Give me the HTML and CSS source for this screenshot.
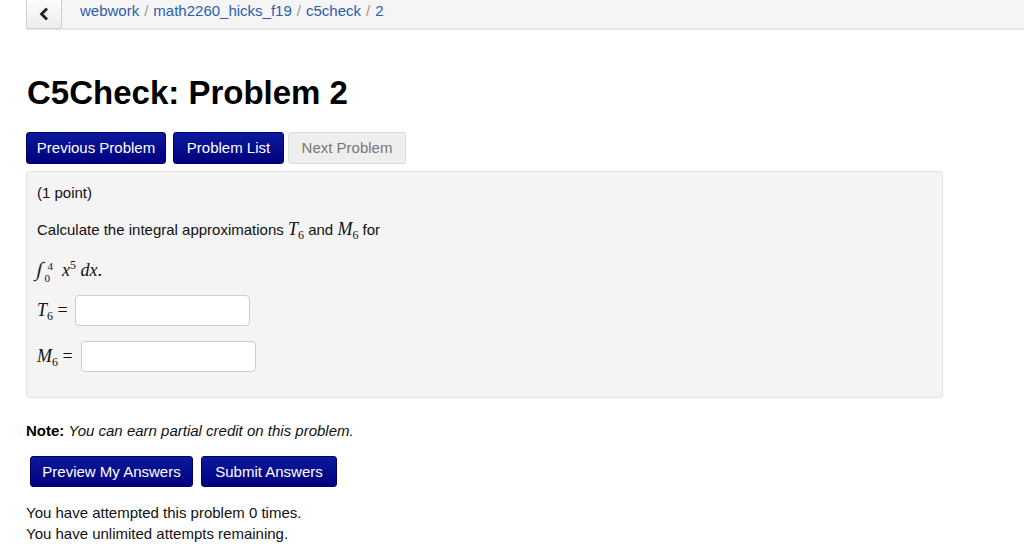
FILE: index.html
```html
<!DOCTYPE html>
<html>
<head>
<meta charset="utf-8">
<link rel="stylesheet" href="styles.css">
</head>
<body>
<div class="page">
  <div class="crumbbar">
    <div class="back"><svg width="10" height="14" viewBox="0 0 10 14"><path d="M8 1.5 L2.5 7 L8 12.5" fill="none" stroke="#222" stroke-width="2.8"/></svg></div>
    <div class="crumbs"><a>webwork</a><span class="sep">/</span><a>math2260_hicks_f19</a><span class="sep">/</span><a>c5check</a><span class="sep">/</span><a>2</a></div>
  </div>
  <h1 class="title">C5Check: Problem 2</h1>
  <div class="navbtns">
    <span class="btn primary prev">Previous Problem</span>
    <span class="btn primary list">Problem List</span>
    <span class="btn disabled next">Next Problem</span>
  </div>
  <div class="problem">
    <p class="pt">(1 point)</p>
    <p class="q">Calculate the integral approximations <span class="m"><i>T</i><sub>6</sub></span> and <span class="m"><i>M</i><sub>6</sub></span> for</p>
    <p class="integral"><span class="m"><i class="int">∫</i><span class="lims"><span class="up">4</span><span class="lo">0</span></span><i>x</i><sup>5</sup> <i>dx</i>.</span></p>
    <div class="ans first"><span class="m lbl"><i>T</i><sub>6</sub> =</span><span class="inp"></span></div>
    <div class="ans second"><span class="m lbl"><i>M</i><sub>6</sub> =</span><span class="inp"></span></div>
  </div>
  <p class="note"><b>Note:</b> <i>You can earn partial credit on this problem.</i></p>
  <div class="subbtns">
    <span class="btn primary preview">Preview My Answers</span>
    <span class="btn primary submit">Submit Answers</span>
  </div>
  <p class="att">You have attempted this problem 0 times.<br>You have unlimited attempts remaining.</p>
</div>
</body>
</html>
```
FILE: styles.css
```css
html, body { margin: 0; padding: 0; background: #fff; }
body { font-family: "Liberation Sans", Arial, sans-serif; font-size: 15px; color: #111; }
.page { padding-left: 26px; }
.crumbbar { display: flex; height: 28px; background: #f5f5f5; border-bottom: 2px solid #e6e6e6; }
.back { width: 36px; height: 29px; box-sizing: border-box; border: 1px solid #cfcfcf; border-top: none; border-radius: 0 0 4px 4px; background: linear-gradient(#fcfcfc, #ededed); display: flex; align-items: center; justify-content: center; margin-bottom: -1px; }
.crumbs { padding-left: 18px; line-height: 22px; font-size: 15px; color: #2a5db0; }
.crumbs .sep { color: #999; padding: 0 5px; }
.title { font-size: 33px; font-weight: bold; margin: 45px 0 0 1px; line-height: 36px; color: #000; }
.navbtns { display: flex; margin-top: 21px; }
.btn { display: inline-block; height: 32px; line-height: 30px; box-sizing: border-box; border-radius: 3px; font-size: 15px; text-align: center; }
.primary { background: linear-gradient(#0c1a9c, #00007d); color: #fff; border: 1px solid #000066; }
.disabled { background: #eeeeee; color: #777; border: 1px solid #dcdcdc; }
.prev { width: 140px; }
.list { width: 111px; margin-left: 7px; }
.next { width: 118px; margin-left: 4px; }
.problem { margin-top: 7px; width: 917px; height: 227px; box-sizing: border-box; background: #f4f4f4; border: 1px solid #e3e3e3; border-radius: 3px; padding: 11px 10px; }
.problem p { margin: 0; }
.pt { line-height: 20px; }
.q { margin-top: 16px !important; line-height: 20px; }
.m { font-family: "Liberation Serif", "Times New Roman", serif; font-size: 18px; color: #111; }
.m sub, .m sup { font-size: 12px; font-style: normal; line-height: 0; }
.m sub { vertical-align: -4px; }
.m sup { vertical-align: 7px; }
.integral { margin-top: 18px !important; line-height: 22px; height: 22px; }
.int { font-size: 20px; display: inline-block; transform: skewX(-12deg); }
.lims { display: inline-block; vertical-align: -6px; font-size: 11px; line-height: 12px; margin-left: 2px; margin-right: 9px; }
.lims .up, .lims .lo { display: block; }
.lims .up { margin-left: 3px; }
.ans { display: flex; align-items: center; gap: 7px; }
.first { margin-top: 15px; }
.second { margin-top: 15px; }
.second .lbl { margin-right: 1px; }
.lbl { font-size: 18px; }
.inp { display: inline-block; width: 175px; height: 31px; box-sizing: border-box; background: #fff; border: 1px solid #ccc; border-radius: 4px; }
.note { margin: 23px 0 0 0; line-height: 20px; }
.note b { color: #000; }
.subbtns { display: flex; margin: 15px 0 0 4px; }
.subbtns .btn { height: 31px; line-height: 29px; }
.preview { width: 163px; }
.submit { width: 136px; margin-left: 8px; }
.att { margin: 15px 0 0 0; line-height: 21px; }
```
